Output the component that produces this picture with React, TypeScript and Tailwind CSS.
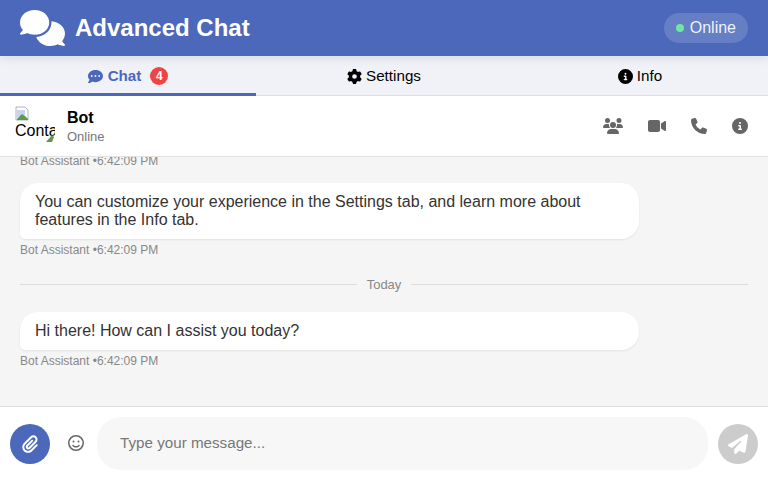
import { FaComments, FaCommentDots, FaGear, FaCircleInfo, FaUsers, FaVideo, FaPhone, FaPaperclip, FaPaperPlane, FaRegFaceSmile } from 'react-icons/fa6';

function BrokenImage() {
  return (
    <svg width="16" height="16" viewBox="0 0 16 16" className="absolute left-0 top-0">
      <path d="M1 1h9l3 3v10H1z" fill="#fff" stroke="#9aa0a6" strokeWidth="0.8" />
      <path d="M2 4h8v5l-8 3z" fill="#c6d4f4" />
      <path d="M2 13l5-5 3 2 3 3v1H2z" fill="#5d9b48" />
    </svg>
  );
}

function Bubble({ children, meta }: { children: React.ReactNode; meta: string }) {
  return (
    <div className="flex flex-col">
      <div className="w-[619px] rounded-[18px] rounded-bl-[5px] bg-white px-[15px] py-[10px] text-base leading-[18px] text-[#333] shadow-[0_1px_2px_rgba(0,0,0,0.08)]">
        {children}
      </div>
      <div className="mt-[4px] text-xs leading-[14px] text-[#888]">{meta}</div>
    </div>
  );
}

export default function App() {
  return (
    <div className="flex h-[480px] w-[768px] flex-col overflow-hidden bg-white font-['Liberation_Sans',sans-serif]">
      {/* Header */}
      <div className="relative z-10 flex h-14 shrink-0 items-center justify-between bg-[#4b68ba] pl-5 pr-5 text-white shadow-[0_2px_10px_rgba(0,0,0,0.1)]">
        <div className="flex items-center gap-[10px]">
          <FaComments className="h-10 w-[45px]" />
          <span className="text-2xl font-bold">Advanced Chat</span>
        </div>
        <div className="flex h-[30px] items-center gap-[6px] rounded-[15px] bg-white/15 px-3 text-base text-[#eef1fa]">
          <span className="h-2 w-2 rounded-full bg-[#6ee7a0]" />
          Online
        </div>
      </div>

      {/* Tabs */}
      <div className="flex h-10 shrink-0 border-b border-[#dde0e8] bg-[#f0f2f7] text-[15.2px]">
        <div className="flex h-10 flex-1 items-start justify-center gap-[9px] border-b-[3px] border-[#4b68ba] pt-[9px] font-bold text-[#4b68ba]">
          <span className="flex items-center gap-[5px]">
            <FaCommentDots className="h-[15px] w-[15px]" />
            Chat
          </span>
          <span className="mt-[2px] flex h-[18px] w-[18px] items-center justify-center rounded-full bg-[#ef4444] text-xs font-bold text-white">4</span>
        </div>
        <div className="flex flex-1 items-start justify-center gap-[5px] pt-[9px] text-black">
          <span className="flex items-center gap-[4px]">
            <FaGear className="h-[15px] w-[15px]" />
            Settings
          </span>
        </div>
        <div className="flex flex-1 items-start justify-center pt-[9px] text-black">
          <span className="flex items-center gap-[4px]">
            <FaCircleInfo className="h-[15px] w-[15px]" />
            Info
          </span>
        </div>
      </div>

      {/* Contact */}
      <div className="flex h-[61px] shrink-0 items-center justify-between border-b border-[#e2e2e2] bg-white pl-[15px] pr-5">
        <div className="flex items-center gap-3">
          <div className="relative h-10 w-10 overflow-hidden text-base leading-[18px] text-black">
            <BrokenImage />
            <span className="absolute left-0 top-[16px] whitespace-nowrap">Contact</span>
            <svg width="10" height="10" viewBox="0 0 10 10" className="absolute left-[30px] top-[27px]">
              <path d="M1 9l6-7 2 2-2 5z" fill="#5d9b48" />
            </svg>
          </div>
          <div className="flex flex-col pt-[2px]">
            <span className="text-base font-bold leading-[20px] text-black">Bot</span>
            <span className="text-[13px] leading-[18px] text-[#777]">Online</span>
          </div>
        </div>
        <div className="flex items-center gap-[25px] text-[#666]">
          <FaUsers className="h-4 w-5" />
          <FaVideo className="h-4 w-[18px]" />
          <FaPhone className="h-4 w-4" />
          <FaCircleInfo className="h-4 w-4" />
        </div>
      </div>

      {/* Messages */}
      <div className="flex min-h-0 flex-1 flex-col justify-end overflow-hidden bg-[#f5f5f5] px-5 pb-[38px]">
        <div className="text-xs leading-[14px] text-[#888]">Bot Assistant •6:42:09 PM</div>
        <div className="mt-[15px]">
          <Bubble meta="Bot Assistant •6:42:09 PM">
            You can customize your experience in the Settings tab, and learn more about features in the Info tab.
          </Bubble>
        </div>
        <div className="mb-[20px] mt-[20px] flex items-center gap-[10px] text-[13px] leading-[15px] text-[#888]">
          <div className="h-px flex-1 bg-[#ddd]" />
          Today
          <div className="h-px flex-1 bg-[#ddd]" />
        </div>
        <Bubble meta="Bot Assistant •6:42:09 PM">Hi there! How can I assist you today?</Bubble>
      </div>

      {/* Input */}
      <div className="flex h-[74px] shrink-0 items-center border-t border-[#ddd] bg-white px-[10px]">
        <div className="flex h-10 w-10 shrink-0 items-center justify-center rounded-full bg-[#4b68ba] text-white">
          <FaPaperclip className="h-[18px] w-[18px]" />
        </div>
        <FaRegFaceSmile className="ml-[18px] h-4 w-4 shrink-0 -translate-y-px text-[#666]" />
        <div className="ml-[13px] flex h-[53px] flex-1 items-center rounded-3xl bg-[#f7f7f7] pl-[23px] text-[15.2px] text-[#777]">
          Type your message...
        </div>
        <div className="ml-[10px] flex h-10 w-10 shrink-0 items-center justify-center rounded-full bg-[#cccccc] text-white">
          <FaPaperPlane className="h-[20px] w-[20px]" />
        </div>
      </div>
    </div>
  );
}
